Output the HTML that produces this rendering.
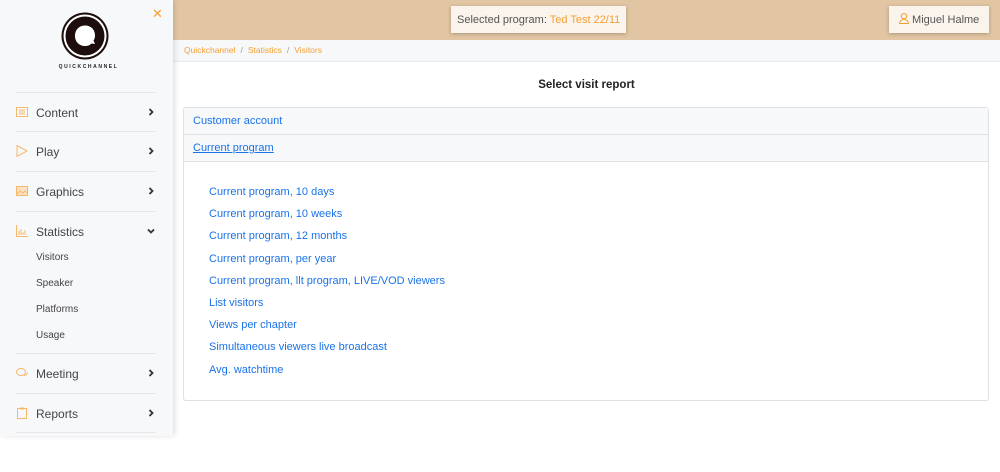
<!DOCTYPE html>
<html><head><style>
*{box-sizing:border-box;margin:0;padding:0}
body{width:1000px;height:436px;overflow:hidden;background:#fff;font-family:"Liberation Sans",sans-serif;position:relative}
.sb{position:absolute;left:0;top:0;width:173px;height:436px;background:#f7f8fa;box-shadow:2px 0 5px rgba(0,0,0,.12);z-index:2}
.x{position:absolute;left:152px;top:6px;color:#f5a034;font-size:13px}
.logo{position:absolute;left:61px;top:12px}
.lt{position:absolute;left:0;width:173px;top:64px;text-align:center;font-size:5px;letter-spacing:1.6px;font-weight:bold;color:#222;padding-left:4px}
.item{position:absolute;left:16px;width:140px;height:40px;border-top:1px solid #e6e7ea;font-size:12px;color:#444}
.item span.t{position:absolute;left:20px;top:13px}
.item .ic{position:absolute;left:0;top:13px;width:12px;height:12px}
.item .ch{position:absolute;right:1px;top:15px;width:8px;height:8px}
.sub{position:absolute;left:36px;font-size:10px;color:#444}
.hdr{position:absolute;left:173px;top:0;width:827px;height:40px;background:#e2c6a3}
.pill{position:absolute;background:#faf4ec;box-shadow:0 1px 4px rgba(0,0,0,.25);font-size:11px;color:#555;padding:0 6px;height:27px;line-height:27px;top:6px}
.bc{position:absolute;left:173px;top:40px;width:827px;height:22px;background:#f7f8fa;border-bottom:1px solid #e8e9ec;font-size:8.5px;color:#f5a034;padding:5px 11px}
.bc i{color:#999;font-style:normal;margin:0 5px}
h1{position:absolute;left:173px;width:827px;top:79px;text-align:center;font-size:11.5px;font-weight:bold;color:#222}
.box{position:absolute;left:183px;top:107px;width:806px;height:294px;border:1px solid #dfe1e5;border-radius:3px}
.row{height:27px;background:#f7f8fa;border-bottom:1px solid #dfe1e5;font-size:11px;color:#1a73e8;padding:7px 9px}
.links{padding:19px 25px;font-size:11px;color:#1a73e8;line-height:22.2px}
</style></head><body>
<div class="sb">
<div class="x">✕</div>
<svg class="logo" width="48" height="48" viewBox="0 0 48 48"><circle cx="24" cy="24" r="23.5" fill="#1d0d0d"/><circle cx="24" cy="24" r="21.5" fill="#fff"/><circle cx="24" cy="24" r="19.5" fill="#1d0d0d"/><path d="M24 13.5c-6 0-10 4.5-10 10.5s4.5 10 10 10c3 0 5-1 6.5-2.5l3.5 .5-1.5-3.5c1-1.5 1.5-3 1.5-5 0-6-4-10-10-10z" fill="#fff"/></svg>
<div class="lt">QUICKCHANNEL</div>
<div class="item" style="top:92px"><svg class="ic" viewBox="0 0 12 12"><rect x=".5" y="1.5" width="11" height="9" fill="none" stroke="#f7b76a"/><path d="M3 4h6M3 6h6M3 8h6" stroke="#f7b76a"/></svg><span class="t">Content</span><svg class="ch" viewBox="0 0 8 8"><path d="M2.5 1l3 3-3 3" fill="none" stroke="#333" stroke-width="1.8"/></svg></div>
<div class="item" style="top:131px"><svg class="ic" viewBox="0 0 12 12"><path d="M1 .5L11 6 1 11.5z" fill="none" stroke="#f7b76a"/></svg><span class="t">Play</span><svg class="ch" viewBox="0 0 8 8"><path d="M2.5 1l3 3-3 3" fill="none" stroke="#333" stroke-width="1.8"/></svg></div>
<div class="item" style="top:171px"><svg class="ic" viewBox="0 0 12 12"><rect x=".5" y="1.5" width="11" height="9" fill="#fde3c3" stroke="#f7b76a"/><path d="M1 9l3-3 3 2 2-2 2 2" fill="none" stroke="#f7b76a"/></svg><span class="t">Graphics</span><svg class="ch" viewBox="0 0 8 8"><path d="M2.5 1l3 3-3 3" fill="none" stroke="#333" stroke-width="1.8"/></svg></div>
<div class="item" style="top:211px"><svg class="ic" viewBox="0 0 12 12"><path d="M.5 0v11.5H12M3 10V6M5 10V4M7 10V7M9 10V5" stroke="#f7b76a" fill="none"/></svg><span class="t">Statistics</span><svg class="ch" viewBox="0 0 8 8"><path d="M1 2.5l3 3 3-3" fill="none" stroke="#333" stroke-width="1.8"/></svg></div>
<div class="sub" style="top:252px">Visitors</div>
<div class="sub" style="top:278px">Speaker</div>
<div class="sub" style="top:304px">Platforms</div>
<div class="sub" style="top:330px">Usage</div>
<div class="item" style="top:353px"><svg class="ic" viewBox="0 0 12 12"><ellipse cx="5" cy="5" rx="4.5" ry="3.5" fill="none" stroke="#f7b76a"/><path d="M8 8.5a4 3 0 0 0 3.5-3" fill="none" stroke="#f7b76a"/></svg><span class="t">Meeting</span><svg class="ch" viewBox="0 0 8 8"><path d="M2.5 1l3 3-3 3" fill="none" stroke="#333" stroke-width="1.8"/></svg></div>
<div class="item" style="top:393px"><svg class="ic" viewBox="0 0 12 12"><rect x="1.5" y="1.5" width="9" height="10" fill="none" stroke="#f7b76a"/><rect x="4" y=".5" width="4" height="2" fill="#f7b76a"/></svg><span class="t">Reports</span><svg class="ch" viewBox="0 0 8 8"><path d="M2.5 1l3 3-3 3" fill="none" stroke="#333" stroke-width="1.8"/></svg></div>
<div class="item" style="top:432px"></div>
</div>
<div class="hdr">
<div class="pill" style="left:278px;padding:1px 6px 0">Selected program: <span style="color:#f5a034">Ted Test 22/11</span></div>
<div class="pill" style="left:716px;padding:1px 10px 0">
<svg width="10" height="11" viewBox="0 0 10 11" style="vertical-align:-1px"><circle cx="5" cy="3.2" r="2.7" fill="none" stroke="#f5a034"/><path d="M.5 10.5a4.5 4 0 0 1 9 0z" fill="none" stroke="#f5a034"/></svg> Miguel Halme</div>
</div>
<div class="bc">Quickchannel<i>/</i>Statistics<i>/</i>Visitors</div>
<h1>Select visit report</h1>
<div class="box">
<div class="row">Customer account</div>
<div class="row"><u>Current program</u></div>
<div class="links">Current program, 10 days<br>Current program, 10 weeks<br>Current program, 12 months<br>Current program, per year<br>Current program, llt program, LIVE/VOD viewers<br>List visitors<br>Views per chapter<br>Simultaneous viewers live broadcast<br>Avg. watchtime</div>
</div>
</body></html>
